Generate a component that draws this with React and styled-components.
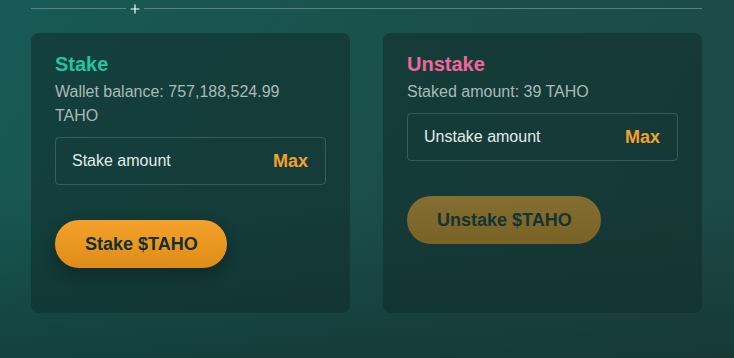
import React from 'react';
import styled, { createGlobalStyle } from 'styled-components';

const GlobalStyle = createGlobalStyle`
  html, body {
    margin: 0;
    padding: 0;
  }
  body {
    font-family: "Liberation Sans", Arial, sans-serif;
    background: #1a4a47;
  }
`;

const Page = styled.div`
  width: 734px;
  height: 358px;
  box-sizing: border-box;
  padding: 0 32px 0 31px;
  background:
    linear-gradient(180deg, rgba(0, 0, 0, 0) 55%, rgba(8, 28, 26, 0.35) 100%),
    linear-gradient(120deg, #175a55 0%, #1b4f4b 50%, #1d4845 100%);
  overflow: hidden;
`;

const Divider = styled.div`
  height: 17px;
  display: flex;
  align-items: center;
  gap: 4px;
`;

const Line = styled.div`
  height: 1px;
  background: rgba(255, 255, 255, 0.28);
  flex: ${(p) => (p.$grow ? 1 : 'none')};
  width: ${(p) => (p.$grow ? 'auto' : '95px')};
`;

const Grid = styled.div`
  margin-top: 16px;
  display: grid;
  grid-template-columns: 319px 319px;
  column-gap: 33px;
`;

const Card = styled.section`
  background: rgba(17, 44, 41, 0.55);
  border-radius: 8px;
  padding: 19px 24px 44px;
  min-height: 280px;
  box-sizing: border-box;
  display: flex;
  flex-direction: column;
  align-items: flex-start;
`;

const Title = styled.h2`
  margin: 0;
  font-size: 20px;
  line-height: 24px;
  font-weight: 700;
  color: ${(p) => p.$color};
`;

const Balance = styled.p`
  margin: 4px 0 0;
  font-size: 16px;
  line-height: 24px;
  color: #a9bab6;
`;

const AmountField = styled.div`
  margin-top: 9px;
  box-sizing: border-box;
  width: 100%;
  height: 48px;
  border: 1px solid rgba(255, 255, 255, 0.16);
  border-radius: 4px;
  display: flex;
  align-items: center;
  justify-content: space-between;
  padding: 0 17px 0 16px;
`;

const Placeholder = styled.span`
  font-size: 16px;
  color: #e2ecea;
`;

const Max = styled.span`
  font-size: 18px;
  font-weight: 700;
  color: #f2a12c;
`;

const ActionButton = styled.button`
  margin-top: 35px;
  height: 48px;
  padding: 0 29px 0 30px;
  border: none;
  border-radius: 24px;
  font-family: inherit;
  font-size: 18px;
  font-weight: 700;
  color: #12302c;
  background: linear-gradient(180deg, #f3a12a 0%, #df8d18 100%);
  box-shadow: ${(p) => (p.$disabled ? 'none' : '0 6px 14px rgba(8, 25, 22, 0.45)')};
  opacity: ${(p) => (p.$disabled ? 0.5 : 1)};
  cursor: pointer;
`;

const Plus = () => (
  <svg width="10" height="10" viewBox="0 0 10 10">
    <path d="M5 0.5v9M0.5 5h9" stroke="#ffffff" strokeWidth="1.2" />
  </svg>
);

export default function App() {
  return (
    <>
      <GlobalStyle />
      <Page>
        <Divider>
          <Line />
          <Plus />
          <Line $grow />
        </Divider>
        <Grid>
          <Card>
            <Title $color="#22c4a4">Stake</Title>
            <Balance>Wallet balance: 757,188,524.99 TAHO</Balance>
            <AmountField>
              <Placeholder>Stake amount</Placeholder>
              <Max>Max</Max>
            </AmountField>
            <ActionButton>Stake $TAHO</ActionButton>
          </Card>
          <Card>
            <Title $color="#f2679b">Unstake</Title>
            <Balance>Staked amount: 39 TAHO</Balance>
            <AmountField>
              <Placeholder>Unstake amount</Placeholder>
              <Max>Max</Max>
            </AmountField>
            <ActionButton $disabled>Unstake $TAHO</ActionButton>
          </Card>
        </Grid>
      </Page>
    </>
  );
}
